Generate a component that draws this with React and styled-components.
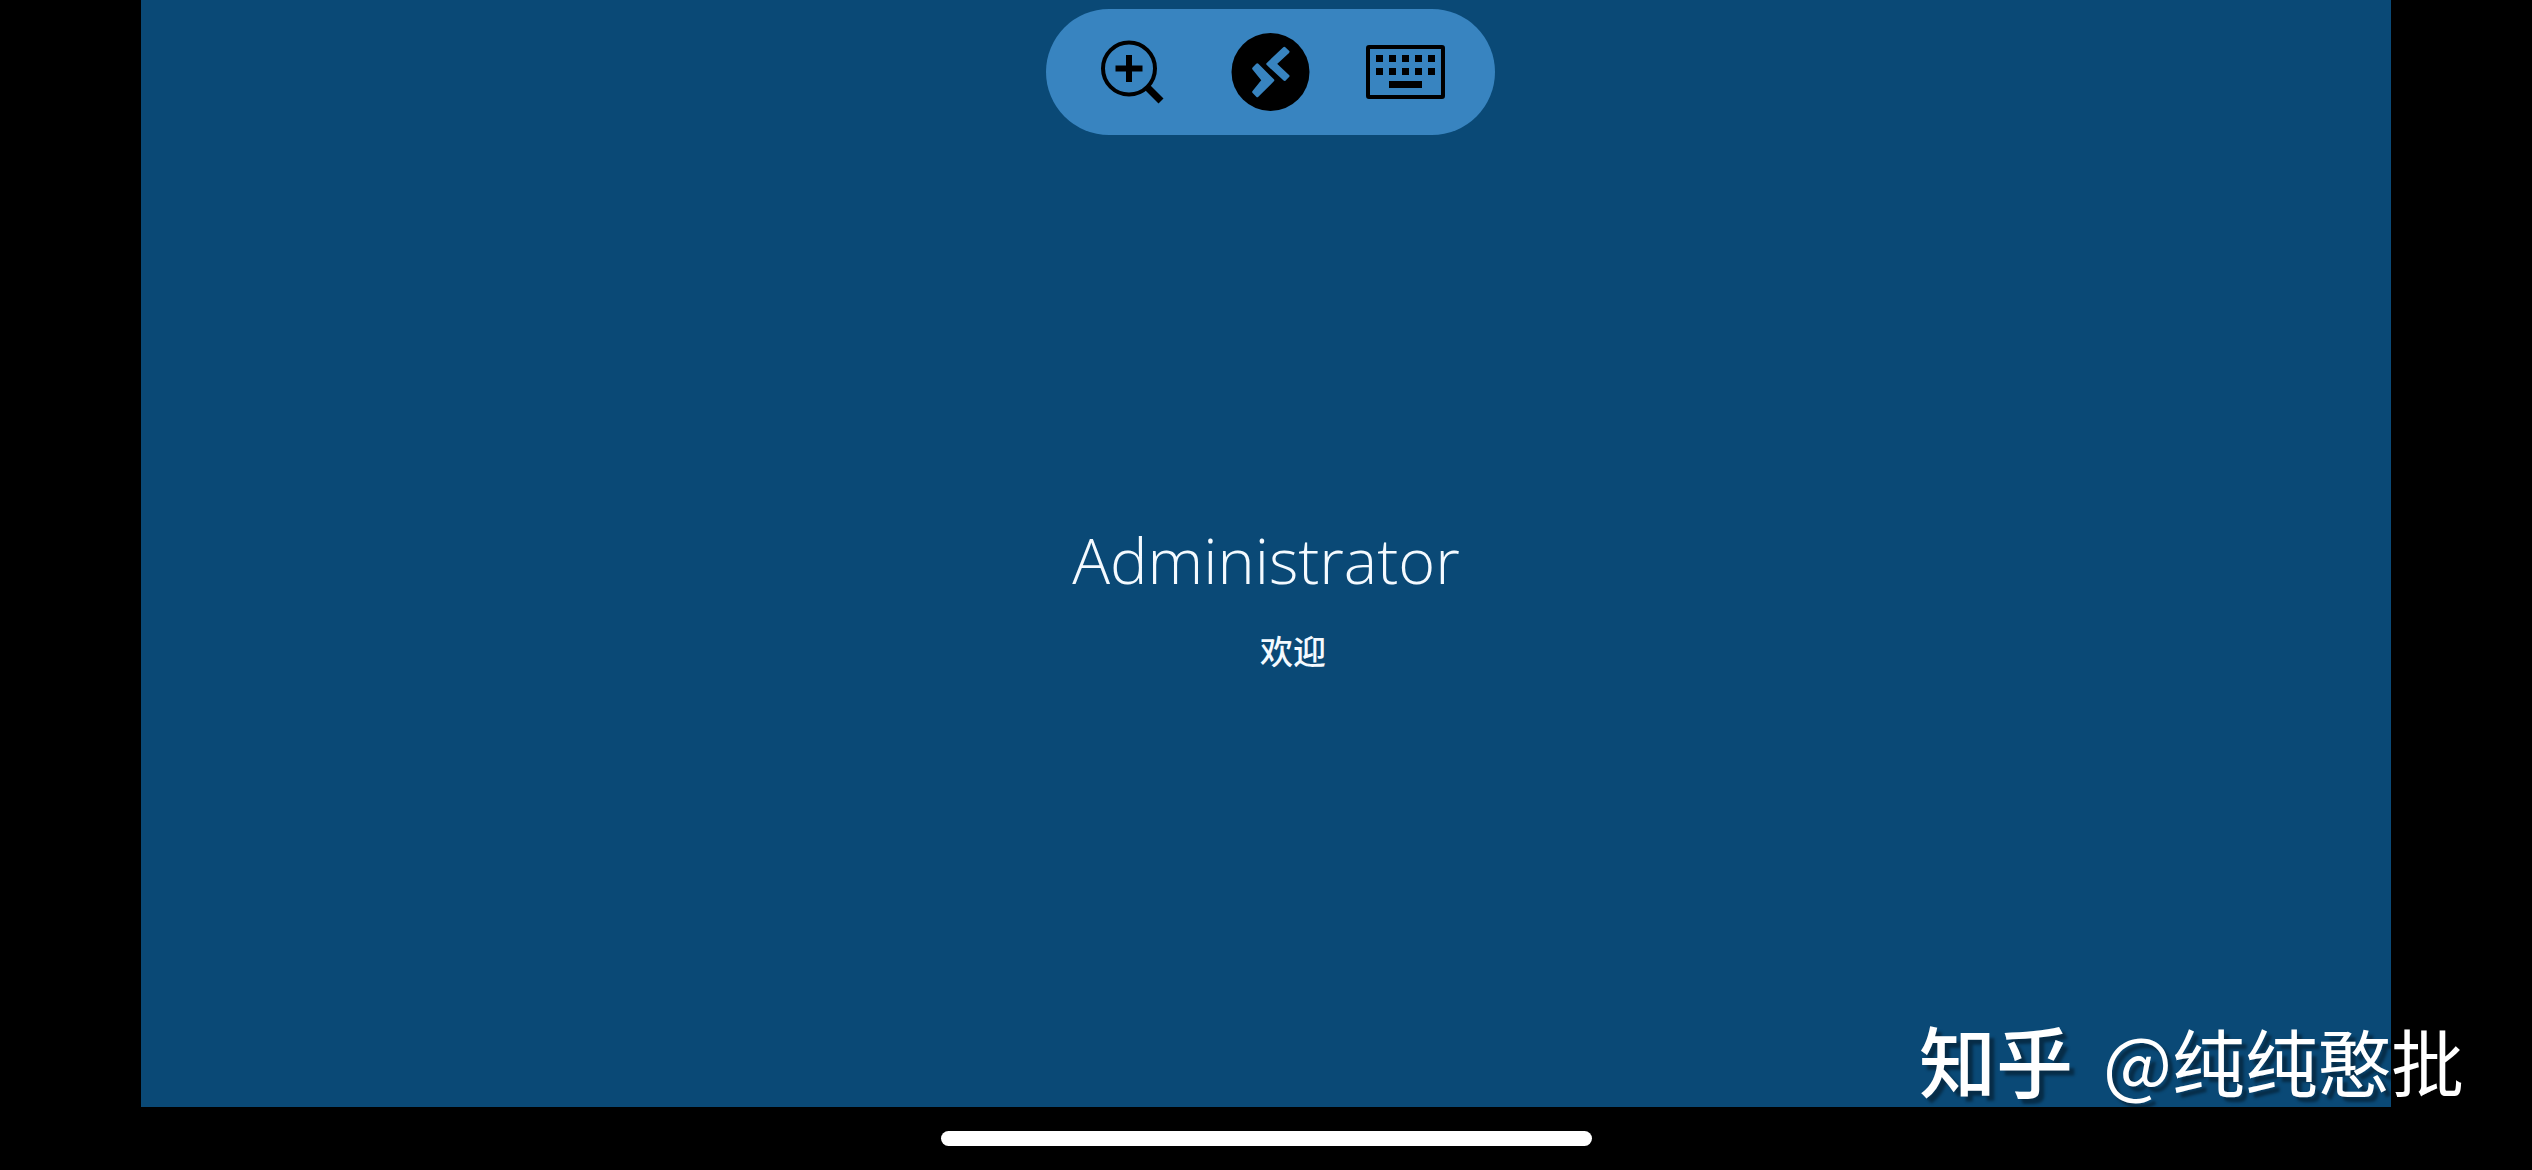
import React from "react";
import styled, { createGlobalStyle } from "styled-components";

const GlobalStyle = createGlobalStyle`
  *, *::before, *::after { box-sizing: border-box; }
  body {
    margin: 0;
    background: #000;
    font-family: "Noto Sans CJK SC", sans-serif;
  }
`;

const Device = styled.div`
  position: relative;
  display: grid;
  grid-template-rows: 1fr auto;
  min-height: 100vh;
  background: #000;
`;

const RemoteScreen = styled.main`
  position: relative;
  display: grid;
  place-items: center;
  margin: 0 141px;
  padding-top: 80px;
  background: #0a4976;
  color: #f4faff;
`;

const ToolbarLayer = styled.div`
  position: absolute;
  top: 9px;
  left: 8px;
  right: 0;
  display: flex;
  justify-content: center;
`;

const ConnectionBar = styled.nav`
  display: flex;
  align-items: stretch;
  height: 126px;
  padding: 0 22px;
  border-radius: 63px;
  background: #3884c0;
`;

const BarButton = styled.button`
  display: grid;
  place-items: center;
  width: 135px;
  padding: 0;
  border: 0;
  background: none;
  color: #000;
  cursor: pointer;
`;

const Icon = styled.svg`
  display: block;
  width: 79px;
  height: 80px;
`;

const SignIn = styled.section`
  display: flex;
  flex-direction: column;
  align-items: center;
`;

const UserName = styled.h1`
  margin: 0;
  font-family: "Open Sans", "Noto Sans CJK SC", sans-serif;
  font-size: 63px;
  font-weight: 300;
  line-height: 92px;
`;

const Status = styled.p`
  margin: 20px 0 0;
  padding-left: 54px;
  font-size: 33px;
  font-weight: 500;
  line-height: 48px;
`;

const HomeArea = styled.footer`
  display: flex;
  justify-content: center;
  padding: 24px 0;
`;

const HomeIndicator = styled.div`
  width: 651px;
  max-width: 80%;
  height: 15px;
  border-radius: 8px;
  background: #fff;
`;

const Watermark = styled.div`
  position: absolute;
  right: 68px;
  bottom: 58px;
  display: flex;
  align-items: center;
  gap: 30px;
  color: #fff;
  font-size: 73px;
  line-height: 106px;
  text-shadow: 5px 5px 3px rgba(0, 0, 0, 0.4);
`;

const Brand = styled.span`
  font-size: 77px;
  font-weight: 500;
`;

const keyColumns = [10, 23, 36, 49, 62];
const keyRows = [23, 36];

function ZoomIcon() {
  return (
    <Icon viewBox="0 0 79 80" fill="none" stroke="currentColor" aria-hidden="true">
      <circle cx="33" cy="36.5" r="26" strokeWidth="4" />
      <path d="M19.5 36.5h27M33 23v27" strokeWidth="6" />
      <path d="M50.5 54.5L65 69" strokeWidth="7" />
    </Icon>
  );
}

function RemoteIcon() {
  return (
    <Icon viewBox="0 0 79 80" aria-hidden="true">
      <circle cx="39.5" cy="40" r="39" fill="currentColor" />
      <g fill="#3884c0" stroke="#3884c0" strokeWidth="3" strokeLinejoin="round">
        <path d="M53.3 16.3L57 19.8 44 31.9 57 44 53.6 47.4 36.8 32Z" />
        <path d="M26.3 32.8L22.7 36.6 32.2 48.2 22.7 60 26.3 63.6 41.8 48.3Z" />
      </g>
    </Icon>
  );
}

function KeyboardIcon() {
  return (
    <Icon viewBox="0 0 79 80" fill="currentColor" aria-hidden="true">
      <rect x="2" y="15" width="75" height="50" rx="1" fill="none" stroke="currentColor" strokeWidth="4" />
      {keyRows.map((y) =>
        keyColumns.map((x) => <rect key={`${x}-${y}`} x={x} y={y} width="7" height="7" />)
      )}
      <rect x="23" y="49" width="33" height="7" />
    </Icon>
  );
}

export default function App() {
  return (
    <>
      <GlobalStyle />
      <Device>
        <RemoteScreen>
          <SignIn>
            <UserName>Administrator</UserName>
            <Status lang="zh-CN">欢迎</Status>
          </SignIn>
          <ToolbarLayer>
            <ConnectionBar>
              <BarButton type="button" aria-label="Zoom">
                <ZoomIcon />
              </BarButton>
              <BarButton type="button" aria-label="Connection">
                <RemoteIcon />
              </BarButton>
              <BarButton type="button" aria-label="Keyboard">
                <KeyboardIcon />
              </BarButton>
            </ConnectionBar>
          </ToolbarLayer>
        </RemoteScreen>
        <HomeArea>
          <HomeIndicator />
        </HomeArea>
        <Watermark lang="zh-CN">
          <Brand>知乎</Brand>
          <span>@纯纯憨批</span>
        </Watermark>
      </Device>
    </>
  );
}
